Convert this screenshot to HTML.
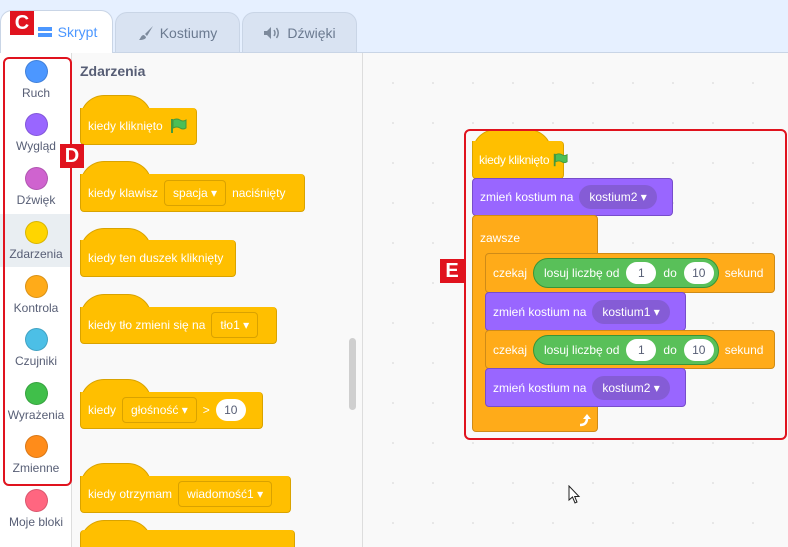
<!DOCTYPE html>
<html><head><meta charset="utf-8"><style>
*{box-sizing:border-box;margin:0;padding:0}
html,body{width:788px;height:547px;overflow:hidden}
body{position:relative;font-family:"Liberation Sans",sans-serif;background:#e6f0ff}
.a{position:absolute}
svg{flex-shrink:0}
.tab{position:absolute;border:1px solid #c9d5e6;border-bottom:none;border-radius:12px 12px 0 0;font-size:14px;color:#6b7a90;display:flex;align-items:center;justify-content:center;gap:6px}
.cat{position:absolute;left:0;width:72px;text-align:center;font-size:12px;color:#575e75}
.cat i{display:block;width:23px;height:23px;border-radius:50%;margin:0 auto 3px;border:1px solid rgba(0,0,0,.15)}
.blk{position:absolute;color:#fff;font-size:12px;display:flex;align-items:center;padding-left:7px;gap:6px;border-radius:4px;white-space:nowrap}
.y{background:#ffbf00;border:1px solid #d9a300}
.p{background:#9966ff;border:1px solid #774dcb}
.o{background:#ffab19;border:1px solid #cf8b17}
.hat{position:absolute;height:24px;border-radius:40px 40px 0 0;background:#ffbf00;border:1px solid #d9a300;border-bottom:none}
.dd{border:1px solid rgba(0,0,0,.15);border-radius:4px;padding:5px 8px;background:#ffbf00}
.pd{background:#855cd6;border-radius:14px;padding:5px 10px}
.num{background:#fff;color:#575e75;border-radius:12px;padding:4px 8px;min-width:30px;text-align:center}
.g{background:#59c059;border:1px solid #389438;border-radius:16px;padding:3px 4px 3px 10px;display:flex;align-items:center;gap:7px}
.lbl{position:absolute;background:#e0131e;color:#fff;font-weight:bold;font-size:20px;text-align:center;line-height:24px;width:24px;height:24px}
</style></head><body>
<div class="tab" style="left:0;top:10px;width:113px;height:43px;background:#fff;color:#4c97ff;z-index:2"><span style="display:inline-block;width:14px;height:10px;border-top:4px solid #4c97ff;border-bottom:4px solid #4c97ff;margin-left:22px"></span>Skrypt</div>
<div class="tab" style="left:115px;top:12px;width:125px;height:41px;background:#d9e3f2"><svg width="16" height="16" viewBox="0 0 16 16"><path d="M15 1 L7 9 L9 11 Z M6 10 C3 10 3 13 1 15 C5 15 8 14 8 12 Z" fill="#7d8a9c"/></svg> Kostiumy</div>
<div class="tab" style="left:242px;top:12px;width:115px;height:41px;background:#d9e3f2"><svg width="18" height="14" viewBox="0 0 18 14"><path d="M1 5h3l4-4v12l-4-4H1z" fill="#7d8a9c"/><path d="M11 4q2 3 0 6M13.5 2q3.5 5 0 10" stroke="#7d8a9c" stroke-width="1.5" fill="none"/></svg> Dźwięki</div>
<div class="a" style="left:0;top:52px;width:788px;height:495px;background:#f9f9f9;border-top:1px solid #c9d5e6"></div>
<div class="a" style="left:0;top:53px;width:72px;height:494px;background:#fff;border-right:1px solid #ddd"></div>
<div class="a" style="left:0;top:214px;width:71px;height:53px;background:#e9eef2"></div>
<div class="a" style="left:362px;top:53px;width:426px;height:494px;border-left:1px solid #ddd;background-color:#f9f9f9;background-image:radial-gradient(#e6e6e6 1px,transparent 1.2px);background-size:40px 40px;background-position:10px 10px"></div>
<div class="a" style="left:349px;top:338px;width:7px;height:72px;border-radius:4px;background:#cfcfcf"></div>
<div class="cat" style="top:60px"><i style="background:#4c97ff"></i>Ruch</div>
<div class="cat" style="top:113px"><i style="background:#9966ff"></i>Wygląd</div>
<div class="cat" style="top:167px"><i style="background:#cf63cf"></i>Dźwięk</div>
<div class="cat" style="top:221px"><i style="background:#ffd500"></i>Zdarzenia</div>
<div class="cat" style="top:275px"><i style="background:#ffab19"></i>Kontrola</div>
<div class="cat" style="top:328px"><i style="background:#4cbfe6"></i>Czujniki</div>
<div class="cat" style="top:382px"><i style="background:#40bf4a"></i>Wyrażenia</div>
<div class="cat" style="top:435px"><i style="background:#ff8c1a"></i>Zmienne</div>
<div class="cat" style="top:489px"><i style="background:#ff6680"></i>Moje bloki</div>
<div class="a" style="left:80px;top:63px;font-size:14px;font-weight:bold;color:#575e75">Zdarzenia</div>
<!-- palette -->
<div class="hat" style="left:80px;top:95px;width:72px"></div>
<div class="blk y" style="left:80px;top:108px;width:117px;height:37px;border-top:none;border-radius:0 4px 4px 4px">kiedy kliknięto <svg width="18" height="16" viewBox="0 0 18 16"><path d="M3 1v14" stroke="#45993d" stroke-width="2"/><path d="M4 2q4-2 7 0t6 0v8q-3 2-6 0t-7 0z" fill="#4cbf56" stroke="#45993d"/></svg></div>
<div class="hat" style="left:80px;top:161px;width:72px"></div>
<div class="blk y" style="left:80px;top:174px;width:225px;height:38px;border-top:none;border-radius:0 4px 4px 4px">kiedy klawisz <span class="dd">spacja ▾</span> naciśnięty</div>
<div class="hat" style="left:80px;top:228px;width:72px"></div>
<div class="blk y" style="left:80px;top:240px;width:156px;height:37px;border-top:none;border-radius:0 4px 4px 4px">kiedy ten duszek kliknięty</div>
<div class="hat" style="left:80px;top:294px;width:72px"></div>
<div class="blk y" style="left:80px;top:307px;width:197px;height:37px;border-top:none;border-radius:0 4px 4px 4px">kiedy tło zmieni się na <span class="dd">tło1 ▾</span></div>
<div class="hat" style="left:80px;top:379px;width:72px"></div>
<div class="blk y" style="left:80px;top:392px;width:183px;height:37px;border-top:none;border-radius:0 4px 4px 4px">kiedy <span class="dd">głośność ▾</span> &gt; <span class="num">10</span></div>
<div class="hat" style="left:80px;top:463px;width:72px"></div>
<div class="blk y" style="left:80px;top:476px;width:211px;height:37px;border-top:none;border-radius:0 4px 4px 4px">kiedy otrzymam <span class="dd">wiadomość1 ▾</span></div>
<div class="hat" style="left:80px;top:520px;width:72px"></div>
<div class="blk y" style="left:80px;top:530px;width:215px;height:30px;border-top:none"></div>
<!-- script -->
<div class="hat" style="left:472px;top:129px;width:80px"></div>
<div class="blk y" style="left:472px;top:141px;width:92px;height:38px;border-top:none;border-radius:0 4px 4px 4px;padding-left:6px;gap:3px;letter-spacing:-0.3px">kiedy kliknięto<svg width="16" height="16" viewBox="0 0 18 16"><path d="M3 1v14" stroke="#45993d" stroke-width="2"/><path d="M4 2q4-2 7 0t6 0v8q-3 2-6 0t-7 0z" fill="#4cbf56" stroke="#45993d"/></svg></div>
<div class="blk p" style="left:472px;top:178px;width:201px;height:38px">zmień kostium na <span class="pd">kostium2 ▾</span></div>
<div class="a o" style="left:472px;top:215px;width:126px;height:217px;border-radius:4px"></div>
<div class="a" style="left:480px;top:231px;color:#fff;font-size:12px">zawsze</div>
<svg class="a" style="left:578px;top:414px" width="14" height="13" viewBox="0 0 14 13"><path d="M2 11 Q9 11 9 4" stroke="#fff" stroke-width="2.5" fill="none"/><path d="M5 5 L9 0 L13 5 Z" fill="#fff"/></svg>
<div class="blk o" style="left:485px;top:253px;width:290px;height:40px">czekaj <span class="g">losuj liczbę od <span class="num">1</span> do <span class="num">10</span></span> sekund</div>
<div class="blk p" style="left:485px;top:292px;width:201px;height:39px">zmień kostium na <span class="pd">kostium1 ▾</span></div>
<div class="blk o" style="left:485px;top:330px;width:290px;height:39px">czekaj <span class="g">losuj liczbę od <span class="num">1</span> do <span class="num">10</span></span> sekund</div>
<div class="blk p" style="left:485px;top:368px;width:201px;height:39px">zmień kostium na <span class="pd">kostium2 ▾</span></div>
<!-- cursor -->
<svg class="a" style="left:568px;top:485px" width="14" height="20" viewBox="0 0 14 20"><path d="M1 1 L1 15 L4.5 12 L7 18 L9 17 L6.7 11.5 L11 11.5 Z" fill="#fff" stroke="#222" stroke-width="1"/></svg>
<!-- annotation -->
<div class="a" style="left:3px;top:57px;width:69px;height:429px;border:2px solid #e0131e;border-radius:6px"></div>
<div class="a" style="left:464px;top:129px;width:323px;height:311px;border:2px solid #e0131e;border-radius:6px"></div>
<div class="lbl" style="left:10px;top:11px;z-index:3">C</div>
<div class="lbl" style="left:60px;top:144px">D</div>
<div class="lbl" style="left:440px;top:259px">E</div>
</body></html>
